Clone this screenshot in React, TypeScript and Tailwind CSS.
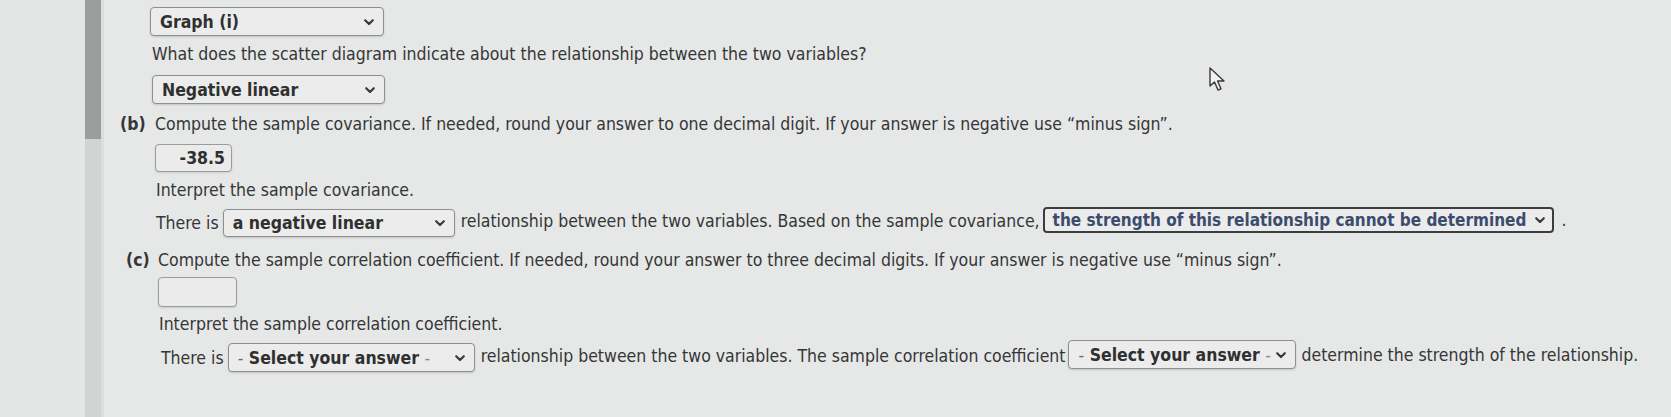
import React from "react";

const FONT = { fontFamily: '"DejaVu Sans Condensed", "DejaVu Sans", Verdana, sans-serif' };

function Chevron({ className = "" }: { className?: string }) {
  return (
    <svg width="12" height="12" viewBox="0 0 12 12" className={`shrink-0 ${className}`} aria-hidden>
      <path d="M2.2 4.2 L6 8 L9.8 4.2" fill="none" stroke="currentColor" strokeWidth="2.2" strokeLinecap="round" strokeLinejoin="round" />
    </svg>
  );
}

function Select({
  label,
  width,
  height = "h-[29px]",
  tone = "plain",
  placeholder = false,
}: {
  label: string;
  width: string;
  height?: string;
  tone?: "plain" | "focus";
  placeholder?: boolean;
}) {
  const box =
    tone === "focus"
      ? "border-2 border-[#3a3d42] text-[#3b4d6c] pl-[8px] pr-[6px] text-[17px]"
      : "border border-[#8e9090] text-[#2f3030] shadow-[0_1px_2px_rgba(0,0,0,0.15)] pl-[9px] pr-[8px]";
  return (
    <div className={`flex items-center justify-between rounded-[4px] bg-[#ececec] ${width} ${height} ${box}`}>
      {placeholder ? (
        <span className="whitespace-nowrap">
          <span className="text-[#6a6b6b]">-</span>
          <span className="font-bold"> Select your answer </span>
          <span className="text-[#8a8b8b]">-</span>
        </span>
      ) : (
        <span className="font-bold whitespace-nowrap">{label}</span>
      )}
      <Chevron className="text-[#3a3a3a]" />
    </div>
  );
}

function InputBox({ value, width, height }: { value?: string; width: string; height: string }) {
  return (
    <div className={`flex items-center justify-end rounded-[4px] border border-[#9a9b9b] bg-[#ebebeb] pr-[6px] shadow-[0_1px_2px_rgba(0,0,0,0.12)] ${width} ${height}`}>
      <span className="font-bold text-[#2f3030]">{value}</span>
    </div>
  );
}

export default function App() {
  return (
    <div className="flex h-[417px] w-[1671px] overflow-hidden bg-[#e6e7e7] text-[17.5px] leading-[20px] text-[#353636]" style={FONT}>
      {/* left gutter */}
      <div className="w-[85px] bg-[#e4e5e5]" />
      {/* scrollbar */}
      <div className="flex w-[16px] flex-col">
        <div className="h-[139px] bg-[#9c9d9d]" />
        <div className="flex-1 bg-[#d2d3d3]" />
      </div>
      <div className="w-[3px] bg-[#dcdddd]" />

      {/* question body */}
      <div className="flex flex-1 flex-col pl-[16px]">
        <div className="ml-[30px] mt-[7px]">
          <Select label="Graph (i)" width="w-[234px]" />
        </div>

        <p className="ml-[32px] mt-[8px]">
          What does the scatter diagram indicate about the relationship between the two variables?
        </p>

        <div className="ml-[32px] mt-[11px]">
          <Select label="Negative linear" width="w-[233px]" />
        </div>

        <div className="relative">
          {/* pointer cursor */}
          <svg className="absolute left-[1088px] -top-[37px]" width="22" height="26" viewBox="0 0 22 26" aria-hidden>
            <path d="M2 1 L2 19 L6.5 15 L10 23 L13 21.8 L9.6 14 L16 14 Z" fill="#f2f2f2" stroke="#3a3a3a" strokeWidth="1.4" strokeLinejoin="round" />
          </svg>
        </div>

        {/* part (b) */}
        <p className="mt-[10px] flex">
          <span className="w-[35px] font-bold">(b)</span>
          <span>
            Compute the sample covariance. If needed, round your answer to one decimal digit. If your answer is negative use “minus sign”.
          </span>
        </p>

        <div className="ml-[35px] mt-[10px]">
          <InputBox value="-38.5" width="w-[77px]" height="h-[28px]" />
        </div>

        <p className="ml-[36px] mt-[8px]">Interpret the sample covariance.</p>

        <div className="ml-[36px] mt-[7px] flex items-center">
          <span>There is</span>
          <div className="ml-[4px]">
            <Select label="a negative linear" width="w-[232px]" height="h-[28px]" />
          </div>
          <span className="ml-[6px] mb-[4px]">
            relationship between the two variables. Based on the sample covariance,
          </span>
          <div className="ml-[3px] mb-[6px]">
            <Select label="the strength of this relationship cannot be determined" width="w-[511px]" height="h-[26px]" tone="focus" />
          </div>
          <span className="ml-[8px] mb-[6px]">.</span>
        </div>

        {/* part (c) */}
        <p className="ml-[6px] mt-[11px] flex">
          <span className="w-[32px] font-bold">(c)</span>
          <span>
            Compute the sample correlation coefficient. If needed, round your answer to three decimal digits. If your answer is negative use “minus sign”.
          </span>
        </p>

        <div className="ml-[38px] mt-[7px]">
          <InputBox width="w-[79px]" height="h-[30px]" />
        </div>

        <p className="ml-[39px] mt-[7px]">Interpret the sample correlation coefficient.</p>

        <div className="ml-[41px] mt-[6px] flex items-center">
          <span>There is</span>
          <div className="ml-[4px]">
            <Select label="- Select your answer -" width="w-[247px]" placeholder />
          </div>
          <span className="ml-[6px] mb-[3px]">
            relationship between the two variables. The sample correlation coefficient
          </span>
          <div className="ml-[3px] mb-[6px]">
            <Select label="- Select your answer -" width="w-[228px]" placeholder />
          </div>
          <span className="ml-[5px] mb-[5px]">determine the strength of the relationship.</span>
        </div>
      </div>
    </div>
  );
}
